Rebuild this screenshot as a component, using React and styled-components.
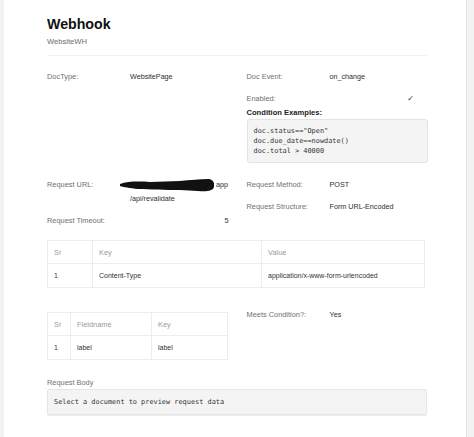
import React from 'react';
import styled, { createGlobalStyle } from 'styled-components';

const GlobalStyle = createGlobalStyle`
  html, body {
    margin: 0;
    padding: 0;
    background: #f2f2f2;
    font-family: "Liberation Sans", Arial, sans-serif;
  }
`;

const Panel = styled.div`
  box-sizing: border-box;
  margin-left: 4px;
  width: 463px;
  min-height: 437px;
  background: #fff;
  border-right: 1px solid #e6e6e6;
  padding: 15px 39px 20px 43px;
`;

const Header = styled.div`
  padding-bottom: 7px;
  border-bottom: 1px solid #f1f1f1;
`;

const Title = styled.h1`
  margin: 0;
  font-size: 14.2px;
  line-height: 18px;
  font-weight: 700;
  color: #111;
`;

const Subtitle = styled.div`
  margin-top: 3px;
  font-size: 7.6px;
  line-height: 12px;
  color: #6b6b6b;
`;

const Section = styled.div`
  display: grid;
  grid-template-columns: 181.5px 181.5px;
  column-gap: 18px;
  align-items: start;
  margin-top: ${p => p.$top}px;
`;

const Column = styled.div`
  display: flex;
  flex-direction: column;
  padding-top: ${p => p.$pad || 0}px;
`;

const Field = styled.div`
  display: grid;
  grid-template-columns: 83px 1fr;
  line-height: 14px;
  margin-bottom: 8px;
`;

const Label = styled.div`
  font-size: 7.4px;
  color: #707070;
`;

const Value = styled.div`
  font-size: 7.2px;
  color: #2e2e2e;
  text-align: ${p => p.$align || 'left'};
  padding-right: ${p => p.$padRight || 0}px;
`;

const Check = styled.span`
  font-family: "DejaVu Sans", sans-serif;
  font-size: 8px;
  color: #333;
`;

const SubHeading = styled.div`
  margin-top: -6px;
  font-size: 7.6px;
  line-height: 10px;
  font-weight: 700;
  color: #222;
`;

const CodeBox = styled.pre`
  margin: 1px 0 0;
  padding: 6px 6px;
  background: #f4f4f4;
  border: 1px solid #e3e3e3;
  border-radius: 3px;
  font-family: "DejaVu Sans Mono", "Liberation Mono", monospace;
  font-size: 6.9px;
  line-height: 10px;
  color: #333;
`;

const Redacted = styled.svg`
  display: inline-block;
  vertical-align: middle;
  margin-left: -10px;
  margin-right: 2px;
`;

const Table = styled.table`
  width: ${p => p.$width}px;
  border-collapse: collapse;
  margin-top: ${p => p.$top || 0}px;
  border: 1px solid #ececec;
`;

const Th = styled.th`
  height: 23px;
  padding: 0 6px;
  text-align: left;
  font-weight: 400;
  font-size: 7.4px;
  color: #9a9a9a;
  border: 1px solid #ececec;
  width: ${p => (p.$w ? `${p.$w}px` : 'auto')};
  box-sizing: border-box;
`;

const Td = styled.td`
  height: 23px;
  padding: 0 6px;
  font-size: 7px;
  color: #333;
  border: 1px solid #ececec;
`;

const BodyLabel = styled.div`
  margin-top: 18px;
  font-size: 7.4px;
  line-height: 10px;
  color: #707070;
`;

const BodyBox = styled.div`
  margin-top: 1px;
  padding: 7px 6px;
  background: #f4f4f4;
  border: 1px solid #e6e6e6;
  border-radius: 2px;
  box-shadow: 0 1px 1px rgba(0, 0, 0, 0.08);
  font-family: "DejaVu Sans Mono", "Liberation Mono", monospace;
  font-size: 6.9px;
  line-height: 10px;
  color: #333;
`;

export default function App() {
  return (
    <>
      <GlobalStyle />
      <Panel>
        <Header>
          <Title>Webhook</Title>
          <Subtitle>WebsiteWH</Subtitle>
        </Header>

        <Section $top={14}>
          <Column>
            <Field>
              <Label>DocType:</Label>
              <Value>WebsitePage</Value>
            </Field>
          </Column>
          <Column>
            <Field>
              <Label>Doc Event:</Label>
              <Value>on_change</Value>
            </Field>
            <Field>
              <Label>Enabled:</Label>
              <Value $align="right" $padRight={14}><Check>✓</Check></Value>
            </Field>
            <SubHeading>Condition Examples:</SubHeading>
            <CodeBox>{`doc.status=="Open"
doc.due_date==nowdate()
doc.total > 40000`}</CodeBox>
          </Column>
        </Section>

        <Section $top={15}>
          <Column>
            <Field>
              <Label>Request URL:</Label>
              <Value>
                <Redacted width="94" height="14" viewBox="0 0 94 14">
                  <path
                    d="M0,6 C8,3 20,3.5 30,4 L60,3 C70,2 80,1 88,1 C93,1 95,5 94,9 C93,13 86,14 78,13 L60,12 C45,12 30,11.5 18,11 C10,10 3,9 0,8 Z"
                    fill="#111"
                  />
                </Redacted>
                app
                <br />
                /api/revalidate
              </Value>
            </Field>
            <Field>
              <Label>Request Timeout:</Label>
              <Value $align="right">5</Value>
            </Field>
          </Column>
          <Column>
            <Field>
              <Label>Request Method:</Label>
              <Value>POST</Value>
            </Field>
            <Field>
              <Label>Request Structure:</Label>
              <Value>Form URL-Encoded</Value>
            </Field>
          </Column>
        </Section>

        <Table $width={378} $top={4}>
          <thead>
            <tr>
              <Th $w={45}>Sr</Th>
              <Th $w={169}>Key</Th>
              <Th>Value</Th>
            </tr>
          </thead>
          <tbody>
            <tr>
              <Td>1</Td>
              <Td>Content-Type</Td>
              <Td>application/x-www-form-urlencoded</Td>
            </tr>
          </tbody>
        </Table>

        <Section $top={20}>
          <Column $pad={4}>
            <Table $width={181}>
              <thead>
                <tr>
                  <Th $w={23}>Sr</Th>
                  <Th $w={81}>Fieldname</Th>
                  <Th>Key</Th>
                </tr>
              </thead>
              <tbody>
                <tr>
                  <Td>1</Td>
                  <Td>label</Td>
                  <Td>label</Td>
                </tr>
              </tbody>
            </Table>
          </Column>
          <Column>
            <Field>
              <Label>Meets Condition?:</Label>
              <Value>Yes</Value>
            </Field>
          </Column>
        </Section>

        <BodyLabel>Request Body</BodyLabel>
        <BodyBox>Select a document to preview request data</BodyBox>
      </Panel>
    </>
  );
}
